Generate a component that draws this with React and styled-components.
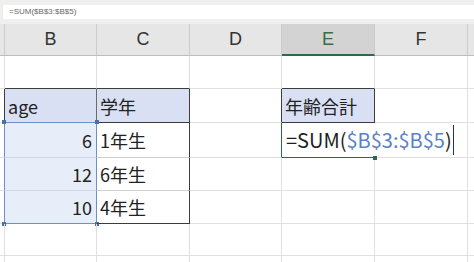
import React from "react"
import styled, { createGlobalStyle } from "styled-components"

const GRID = "#e0e0e0"
const DARK = "#3c3c3c"
const BLUE = "#6f8fca"
const FILL = "#d9e0f3"
const HL = "#e8eef9"
const GREEN = "#2e6b45"

const GlobalStyle = createGlobalStyle`
  html, body {
    margin: 0;
    padding: 0;
    background: #fff;
    overflow: hidden;
  }
  body {
    font-family: "Noto Sans CJK JP", "Noto Sans", sans-serif;
    color: #222;
  }
`

const Page = styled.div`
  width: 474px;
  height: 262px;
  overflow: hidden;
  background: #fff;
`

const FormulaStrip = styled.div`
  height: 24px;
  box-sizing: border-box;
  padding: 5px 0 5px 3px;
  background: #efefef;
`

const FormulaBox = styled.div`
  height: 14px;
  background: #fff;
  padding-left: 6px;
  font-family: "Liberation Sans", Arial, sans-serif;
  font-size: 8px;
  line-height: 14px;
  color: #6a6a6a;
`

const Sheet = styled.div`
  display: grid;
  grid-template-columns: 5px 92px 93px 92px 93px 93px 40px;
  grid-template-rows: 32px 33px 34px 35px 33px 33px 32px 20px;
`

const Head = styled.div`
  box-sizing: border-box;
  display: flex;
  align-items: center;
  justify-content: center;
  background: ${({ $active }) => ($active ? "#d3d3d3" : "#e6e6e6")};
  border-right: 1px solid #cbcbcb;
  border-bottom: ${({ $active }) => ($active ? `2px solid ${GREEN}` : "1px solid #bdbdbd")};
  font-family: "Liberation Sans", Arial, sans-serif;
  font-size: 18px;
  color: ${({ $active }) => ($active ? "#356e47" : "#333")};
`

const Cell = styled.div`
  position: relative;
  box-sizing: border-box;
  display: flex;
  align-items: center;
  justify-content: ${({ $align }) => ($align === "right" ? "flex-end" : "flex-start")};
  padding: ${({ $align }) => ($align === "right" ? "0 4px 0 0" : "0 0 0 3px")};
  background: ${({ $bg }) => $bg || "transparent"};
  border-right: 1px solid ${({ $r }) => $r || GRID};
  border-bottom: 1px solid ${({ $b }) => $b || GRID};
  font-size: 18px;
  white-space: nowrap;
  overflow: visible;
  z-index: ${({ $edit }) => ($edit ? 2 : "auto")};
`

const Formula = styled.span`
  font-size: 20px;
  color: #1e1e1e;
  padding-left: 1px;
  border-right: 1px solid #333;
  padding-right: 1px;
  line-height: 30px;
`

const Ref = styled.span`
  color: #5b82c6;
`

const Handle = styled.span`
  position: absolute;
  width: 4px;
  height: 4px;
  background: ${({ $color }) => $color};
  ${({ $v }) => ($v === "top" ? "top: -3px;" : "bottom: -3px;")}
  ${({ $h }) => ($h === "left" ? "left: -3px;" : "right: -3px;")}
`

const heads = ["", "B", "C", "D", "E", "F", ""]

const blank = (o = {}) => ({ text: "", ...o })

const rows = [
  [blank(), blank({ b: DARK }), blank({ b: DARK }), blank(), blank({ b: DARK }), blank(), blank()],
  [
    blank({ r: DARK }),
    blank({ text: "age", bg: FILL, r: "#6b6b6b", b: BLUE }),
    blank({ text: "学年", bg: FILL, r: DARK, b: DARK }),
    blank({ r: DARK }),
    blank({ text: "年齢合計", bg: FILL, r: DARK, b: DARK }),
    blank(),
    blank(),
  ],
  [
    blank({ r: BLUE }),
    blank({ text: "6", align: "right", bg: HL, r: BLUE, b: "#cdd6e8", handles: ["top-left", "top-right"] }),
    blank({ text: "1年生", r: DARK, b: "#cfcfcf" }),
    blank({ r: GREEN }),
    blank({ formula: true, r: "transparent", b: GREEN, edit: true }),
    blank(),
    blank(),
  ],
  [
    blank({ r: BLUE }),
    blank({ text: "12", align: "right", bg: HL, r: BLUE, b: "#cdd6e8" }),
    blank({ text: "6年生", r: DARK, b: "#cfcfcf" }),
    blank(),
    blank(),
    blank(),
    blank(),
  ],
  [
    blank({ r: BLUE }),
    blank({ text: "10", align: "right", bg: HL, r: BLUE, b: BLUE, handles: ["bottom-left", "bottom-right"] }),
    blank({ text: "4年生", r: DARK, b: DARK }),
    blank(),
    blank(),
    blank(),
    blank(),
  ],
  Array.from({ length: 7 }, () => blank()),
  Array.from({ length: 7 }, () => blank()),
]

const App = () => {
  return (
    <Page>
      <GlobalStyle />
      <FormulaStrip>
        <FormulaBox>=SUM($B$3:$B$5)</FormulaBox>
      </FormulaStrip>
      <Sheet>
        {heads.map((h, i) => (
          <Head key={"h" + i} $active={h === "E"}>{h}</Head>
        ))}
        {rows.map((row, ri) =>
          row.map((c, ci) => (
            <Cell
              key={ri + "-" + ci}
              $bg={c.bg}
              $r={c.r}
              $b={c.b}
              $align={c.align}
              $edit={c.edit}
            >
              {c.formula ? (
                <Formula>
                  =SUM(<Ref>$B$3:$B$5</Ref>)
                </Formula>
              ) : (
                c.text
              )}
              {c.handles &&
                c.handles.map((p) => {
                  const [v, h] = p.split("-")
                  return <Handle key={p} $v={v} $h={h} $color="#4f6fa8" />
                })}
              {c.edit && <Handle $v="bottom" $h="right" $color={GREEN} />}
            </Cell>
          ))
        )}
      </Sheet>
    </Page>
  )
}

export default App
